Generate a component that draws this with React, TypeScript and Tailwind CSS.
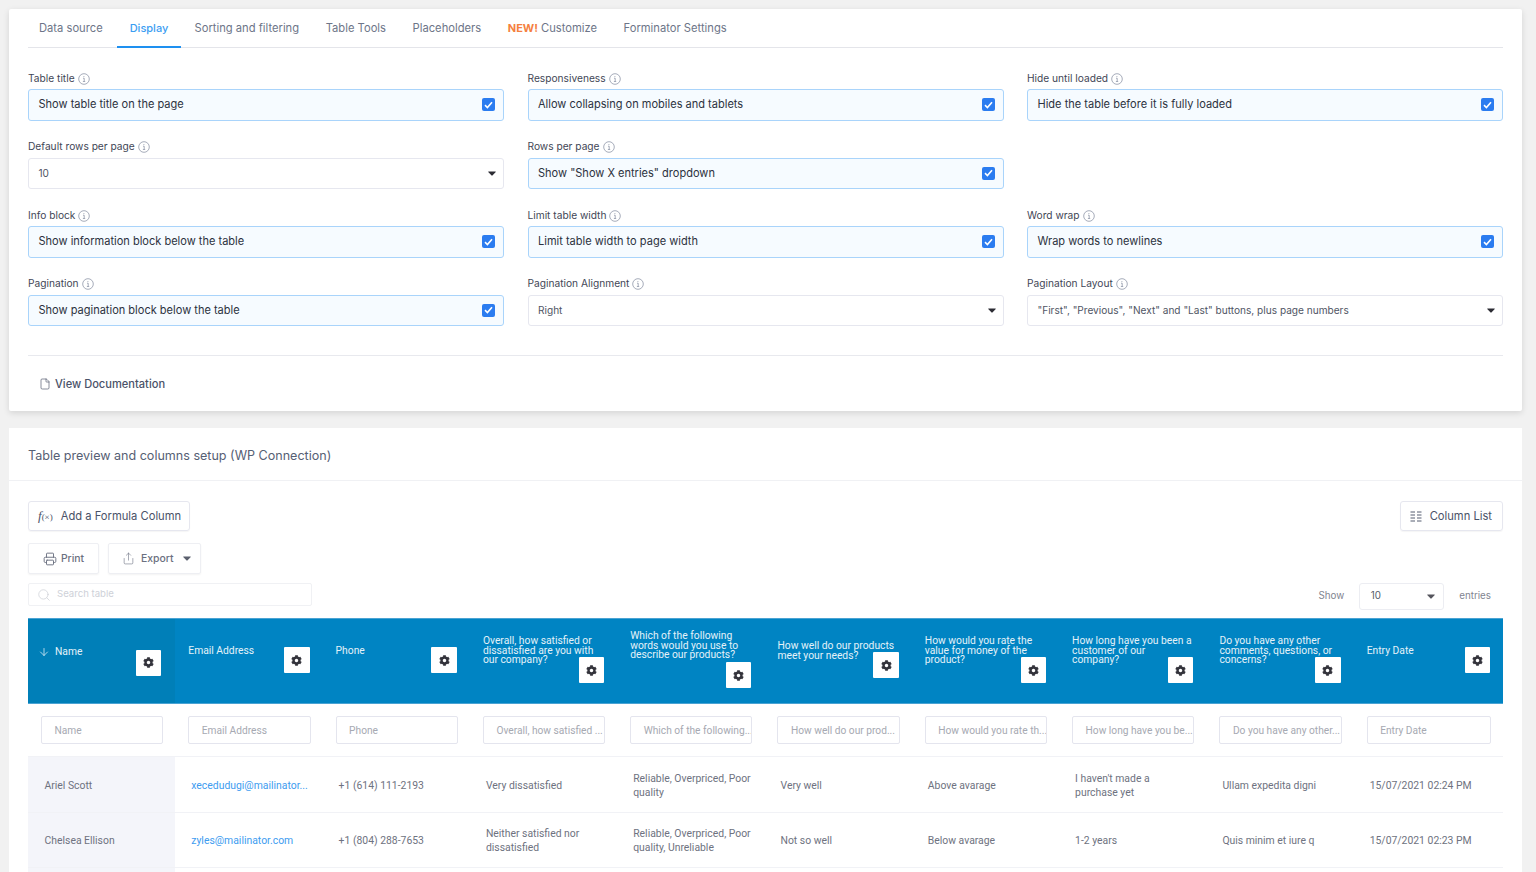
import { ArrowDown, File, Printer, Search, Share } from 'lucide-react';
import { FaCog } from 'react-icons/fa';

const tabs = ['Data source', 'Display', 'Sorting and filtering', 'Table Tools', 'Placeholders', 'Customize', 'Forminator Settings'];

type Field = { label: string; value: string; kind: 'check' | 'select' } | null;

const fields: Field[] = [
  { label: 'Table title', value: 'Show table title on the page', kind: 'check' },
  { label: 'Responsiveness', value: 'Allow collapsing on mobiles and tablets', kind: 'check' },
  { label: 'Hide until loaded', value: 'Hide the table before it is fully loaded', kind: 'check' },
  { label: 'Default rows per page', value: '10', kind: 'select' },
  { label: 'Rows per page', value: 'Show "Show X entries" dropdown', kind: 'check' },
  null,
  { label: 'Info block', value: 'Show information block below the table', kind: 'check' },
  { label: 'Limit table width', value: 'Limit table width to page width', kind: 'check' },
  { label: 'Word wrap', value: 'Wrap words to newlines', kind: 'check' },
  { label: 'Pagination', value: 'Show pagination block below the table', kind: 'check' },
  { label: 'Pagination Alignment', value: 'Right', kind: 'select' },
  { label: 'Pagination Layout', value: '"First", "Previous", "Next" and "Last" buttons, plus page numbers', kind: 'select' },
];

const columns = [
  { title: 'Name', filter: 'Name', drop: false },
  { title: 'Email Address', filter: 'Email Address', drop: false },
  { title: 'Phone', filter: 'Phone', drop: false },
  { title: 'Overall, how satisfied or dissatisfied are you with our company?', filter: 'Overall, how satisfied ...', drop: false },
  { title: 'Which of the following words would you use to describe our products?', filter: 'Which of the following...', drop: true },
  { title: 'How well do our products meet your needs?', filter: 'How well do our prod...', drop: false },
  { title: 'How would you rate the value for money of the product?', filter: 'How would you rate th...', drop: false },
  { title: 'How long have you been a customer of our company?', filter: 'How long have you be...', drop: false },
  { title: 'Do you have any other comments, questions, or concerns?', filter: 'Do you have any other...', drop: false },
  { title: 'Entry Date', filter: 'Entry Date', drop: false },
];

const rows = [
  ['Ariel Scott', 'xecedudugi@mailinator...', '+1 (614) 111-2193', 'Very dissatisfied', 'Reliable, Overpriced, Poor quality', 'Very well', 'Above avarage', "I haven't made a purchase yet", 'Ullam expedita digni', '15/07/2021 02:24 PM'],
  ['Chelsea Ellison', 'zyles@mailinator.com', '+1 (804) 288-7653', 'Neither satisfied nor dissatisfied', 'Reliable, Overpriced, Poor quality, Unreliable', 'Not so well', 'Below avarage', '1-2 years', 'Quis minim et iure q', '15/07/2021 02:23 PM'],
  ['', '', '', '', '', '', '', '', '', ''],
];

function InfoIcon() {
  return (
    <svg width="12" height="12" viewBox="0 0 12 12" fill="none" stroke="#8f97a8" strokeWidth="0.8">
      <circle cx="6" cy="6" r="5.3" />
      <path d="M5 5.2h1.2v3.2M4.9 8.5h2.3M5.9 3.1v0.9" />
    </svg>
  );
}

function Caret({ className }: { className: string }) {
  return (
    <svg className={className} width="8" height="5" viewBox="0 0 8 5" fill="currentColor">
      <path d="M0.6 0.4h6.8c0.4 0 0.6 0.4 0.4 0.7L4.4 4.5c-0.2 0.2-0.6 0.2-0.8 0L0.2 1.1C0 0.8 0.2 0.4 0.6 0.4z" />
    </svg>
  );
}

function CheckBox() {
  return (
    <span className="flex h-[13px] w-[13px] items-center justify-center rounded-[2px] bg-[#2b7cf0]">
      <svg width="9" height="8" viewBox="0 0 9 8" fill="none" stroke="#ffffff" strokeWidth="1.6">
        <path d="M1 4.2l2.4 2.3L8 1.2" />
      </svg>
    </span>
  );
}

function FormField({ field }: { field: Field }) {
  if (!field) return <div />;
  const checked = field.kind === 'check';
  return (
    <div>
      <div className="mb-1 flex h-3.5 items-center gap-[3px] pt-px text-[10.2px] text-[#3f4656]">
        {field.label}
        <InfoIcon />
      </div>
      <div
        className={
          checked
            ? 'flex h-[31.5px] items-center justify-between rounded-[3px] border border-[#a9d4fb] bg-[#f6fbff] pl-[9.5px] pr-2 text-[11.04px] text-[#2c3240]'
            : 'flex h-[31.5px] items-center justify-between rounded-[3px] border border-[#e6e7ef] bg-white pl-[9.5px] pr-[7px] text-[10.1px] text-[#4f5564]'
        }
      >
        <span>{field.value}</span>
        {checked ? <CheckBox /> : <Caret className="text-[#2c2c34]" />}
      </div>
    </div>
  );
}

function GearButton() {
  return (
    <span className="flex h-[26px] w-[25.5px] items-center justify-center rounded-[1px] bg-white text-[#33333b]">
      <FaCog size={11} />
    </span>
  );
}

function ColumnListIcon() {
  return (
    <svg width="12" height="11" viewBox="0 0 12 11" fill="none" stroke="#555c70" strokeWidth="1">
      <path d="M0.5 1h4.5M7 1h4.5M0.5 4h4.5M7 4h4.5M0.5 7h4.5M7 7h4.5M0.5 10h4.5M7 10h4.5" />
    </svg>
  );
}

export default function App() {
  return (
    <div className="h-[872px] overflow-hidden bg-[#f1f1f1] pl-[9px] pr-[14px] pt-[9px] font-['Inter',sans-serif]">
      <div className="h-[402px] rounded-[2px] bg-white px-[19px] shadow-[0_2px_6px_rgba(0,0,0,0.12)]">
        <div className="flex h-[39px] items-stretch border-b border-[#e4e5ea]">
          {tabs.map((tab, i) => (
            <div
              key={tab}
              className={
                tab === 'Display'
                  ? '-mb-px flex items-center border-b-2 border-[#1e90f0] px-[13px] pt-px text-[11px] font-medium text-[#3b9df2]'
                  : i === 0
                    ? 'flex items-center pl-[11px] pr-[14px] pt-px text-[11.2px] text-[#6d7588]'
                    : 'flex items-center px-[13.3px] pt-px text-[11.2px] text-[#6d7588]'
              }
            >
              {tab === 'Customize' && <b className="mr-[3px] text-[11px] font-bold text-[#f5803e]">NEW!</b>}
              {tab}
            </div>
          ))}
        </div>

        <div className="mt-[23px] grid grid-cols-3 gap-x-[23.5px] gap-y-[19px]">
          {fields.map((f, i) => (
            <FormField key={i} field={f} />
          ))}
        </div>

        <div className="mt-[29px] flex h-[56px] items-center gap-1 border-t border-[#e8e9ee] pl-[11px] pt-px text-[11.1px] font-medium text-[#4a5268]">
          <File size={12} strokeWidth={1.3} />
          View Documentation
        </div>
      </div>

      <div className="mt-[17px] h-[500px] bg-white">
        <div className="flex h-[53px] items-center border-b border-[#f0f1f4] pl-[19px] pt-[5px] text-[12.55px] text-[#566074]">
          Table preview and columns setup (WP Connection)
        </div>

        <div className="px-[19px] pt-5">
          <div className="flex items-start justify-between">
            <div className="flex h-[30px] items-center rounded-[3px] border border-[#e6e7ef] pl-[9px] pr-2 text-[11.2px] text-[#4a5268] shadow-[0_1px_1px_rgba(0,0,0,0.04)]">
              <span className="mr-2 font-['Liberation_Serif',serif] text-[13px] italic">f<span className="text-[9px] not-italic">(×)</span></span>
              Add a Formula Column
            </div>
            <div className="flex h-[30px] items-center gap-2 rounded-[3px] border border-[#e6e7ef] pl-[9px] pr-[10px] text-[11.2px] text-[#4a5268] shadow-[0_1px_1px_rgba(0,0,0,0.04)]">
              <ColumnListIcon />
              Column List
            </div>
          </div>

          <div className="mt-[12px] flex gap-[9px]">
            <div className="flex h-[31px] w-[71px] items-center justify-center gap-1 rounded-[2px] border border-[#eeeff3] text-[10.4px] font-medium text-[#6b7080] shadow-[0_1px_2px_rgba(0,0,0,0.05)]">
              <Printer size={14} strokeWidth={1.6} />
              Print
            </div>
            <div className="flex h-[31px] w-[93px] items-center gap-[6px] rounded-[2px] border border-[#eeeff3] pl-[13px] text-[10.4px] font-medium text-[#6b7080] shadow-[0_1px_2px_rgba(0,0,0,0.05)]">
              <Share size={13} strokeWidth={1.1} />
              Export
              <Caret className="ml-[3px] text-[#5b606e]" />
            </div>
          </div>

          <div className="mt-[9px] flex h-[35px] items-start justify-between">
            <div className="flex h-[23px] w-[284px] items-center gap-[6px] rounded-[2px] border border-[#f0f1f4] pl-2 text-[9.6px] text-[#ced1d8]">
              <Search size={14} strokeWidth={1.3} />
              Search table
            </div>
            <div className="flex items-center text-[9.8px] text-[#7f8490]">
              <span>Show</span>
              <div className="mx-[15px] flex h-[27px] w-[85px] items-center justify-between rounded-[3px] border border-[#ecedf2] pl-[10.5px] pr-2 text-[#555b68]">
                10
                <Caret className="text-[#55555d]" />
              </div>
              <span className="mr-3">entries</span>
            </div>
          </div>

          <div className="font-['Roboto',sans-serif]">
            <div className="grid h-[85px] grid-cols-[repeat(9,147.3px)_1fr] border-t border-[#4aa3d3] bg-[#0084c3] text-[10.3px] leading-[9.7px] text-[#e4f2f9]">
              {columns.map((c, i) => (
                <div key={c.title} className={i === 0 ? 'flex flex-col justify-center bg-[#007fb8] pb-[3px] pl-[13px] pr-[14px]' : 'flex flex-col justify-center pb-[3px] pl-[13px] pr-[13px]'}>
                  {i === 0 ? (
                    <div className="-ml-[3px] flex items-center gap-[5px] pt-0.5">
                      <ArrowDown size={12} strokeWidth={1.5} />
                      {c.title}
                    </div>
                  ) : (
                    <div>{c.title}</div>
                  )}
                  <div className={c.drop ? 'mt-0.5 self-end' : '-mt-2 self-end'}>
                    <GearButton />
                  </div>
                </div>
              ))}
            </div>

            <div className="grid h-[54px] grid-cols-[repeat(9,147.3px)_1fr] items-center border-b border-t border-[#f1f2f6] border-t-[#4aa3d3]">
              {columns.map((c) => (
                <div key={c.title} className="pl-[13px] pr-3">
                  <div className="flex h-7 items-center overflow-hidden whitespace-nowrap rounded-[2px] border border-[#e4e5ee] pl-[12.5px] pt-px text-[10.2px] text-[#a6a9b2]">
                    {c.filter}
                  </div>
                </div>
              ))}
            </div>

            {rows.map((row, r) => (
              <div key={r} className="grid h-[55.5px] grid-cols-[repeat(9,147.3px)_1fr] items-stretch border-b border-[#f1f2f6] text-[10.4px] leading-[14px] text-[#6e7280]">
                {row.map((cell, i) => (
                  <div
                    key={i}
                    className={
                      i === 0
                        ? 'flex items-center bg-[#f4f5fa] pl-[16.5px] pr-3 pt-[3px]'
                        : i === 1
                          ? 'flex min-w-0 items-center whitespace-nowrap pl-4 pr-2 pt-[3px] text-[#3d9cf0]'
                          : 'flex items-center pl-4 pr-3 pt-[3px]'
                    }
                  >
                    {cell}
                  </div>
                ))}
              </div>
            ))}
          </div>
        </div>
      </div>
    </div>
  );
}
